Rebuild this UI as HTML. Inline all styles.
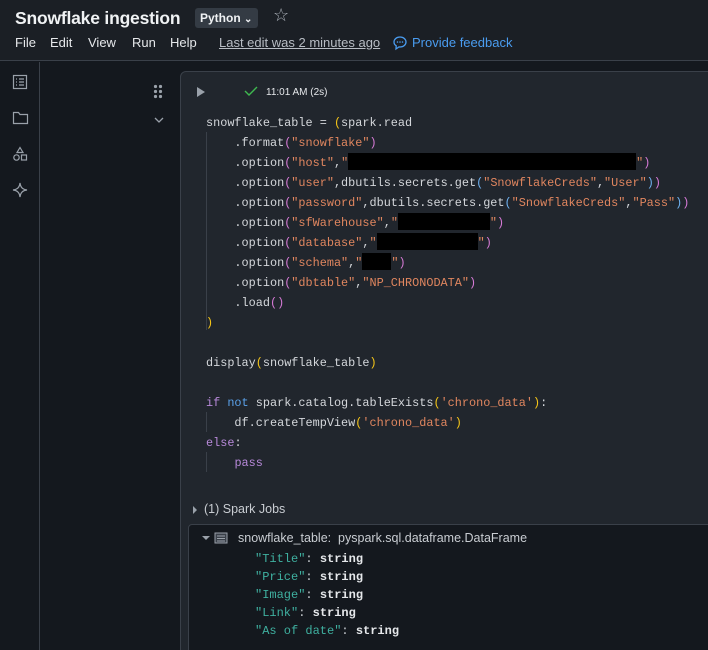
<!DOCTYPE html>
<html style="width:708px;height:650px;overflow:hidden"><head><meta charset="utf-8"><style>
*{margin:0;padding:0;box-sizing:border-box}
body{width:708px;height:650px;background:#14181e;font-family:"Liberation Sans",sans-serif;color:#e6e8eb;position:relative;overflow:hidden}
.hdr{position:absolute;left:0;top:0;width:708px;height:61px;background:#1b1f25;border-bottom:1px solid #3a4049}
.title{position:absolute;left:15px;top:8px;font-size:17.5px;font-weight:bold;color:#f0f2f4;letter-spacing:-0.2px}
.py{position:absolute;left:195px;top:8px;width:63px;height:20px;background:#343b44;border-radius:3px;font-size:12px;font-weight:bold;padding:3px 0 0 5px;color:#f0f2f4}
.star{position:absolute;left:273px;top:5px;font-size:18px;color:#aab0b8}
.menu{position:absolute;top:35px;font-size:13px;color:#e6e8eb}
.side{position:absolute;left:0;top:62px;width:40px;height:588px;border-right:1px solid #3a4049}
.cell{position:absolute;left:180px;top:71px;width:540px;height:590px;background:#21262d;border:1px solid #3a4049;border-radius:6px}
pre{position:absolute;left:206px;top:113px;font-family:"Liberation Mono",monospace;font-size:11.85px;line-height:20px;color:#d4d7db}
.s{color:#e0865f}.b{color:#6fb1f0}.y{color:#f5c518}.m{color:#d67ad6}.k{color:#b789d9}.n{color:#5aa0e8}
.red{display:inline-block;background:#000;height:17px;vertical-align:-4px}
.out{position:absolute;left:188px;top:524px;width:540px;height:140px;background:#14181e;border:1px solid #3a4049;border-radius:4px}
.o{position:absolute;left:255px;font-family:"Liberation Mono",monospace;font-size:12px;font-weight:bold;color:#e6e8eb}
.o span{color:#3fb0a0;font-weight:normal}
.guide{position:absolute;width:1px;background:#3a4049}
</style></head><body>
<div class="hdr">
<div class="title">Snowflake ingestion</div>
<div class="py">Python <span style="font-size:10px">&#8964;</span></div>
<div class="star">☆</div>
<div class="menu" style="left:15px">File</div>
<div class="menu" style="left:50px">Edit</div>
<div class="menu" style="left:88px">View</div>
<div class="menu" style="left:132px">Run</div>
<div class="menu" style="left:170px">Help</div>
<div class="menu" style="left:219px;color:#b8bdc4;text-decoration:underline">Last edit was 2 minutes ago</div>
<svg style="position:absolute;left:392px;top:35px" width="16" height="16" viewBox="0 0 16 16"><path d="M8 2C4.5 2 2 4.2 2 7c0 1.6.8 3 2.2 3.8L4 14l3-2.1c.3 0 .7.1 1 .1 3.5 0 6-2.2 6-5S11.5 2 8 2z" fill="none" stroke="#4a9cf0" stroke-width="1.3"/><circle cx="5.5" cy="7" r=".8" fill="#4a9cf0"/><circle cx="8" cy="7" r=".8" fill="#4a9cf0"/><circle cx="10.5" cy="7" r=".8" fill="#4a9cf0"/></svg>
<div class="menu" style="left:412px;color:#4a9cf0">Provide feedback</div>
</div>
<div class="side">
<svg style="position:absolute;left:12px;top:12px" width="16" height="16" viewBox="0 0 16 16" fill="none" stroke="#9aa1aa" stroke-width="1.2"><rect x="1.5" y="1.5" width="13" height="13"/><path d="M4 5h1M7 5h5M4 8h1M7 8h5M4 11h1M7 11h5"/></svg>
<svg style="position:absolute;left:12px;top:48px" width="17" height="16" viewBox="0 0 17 16" fill="none" stroke="#9aa1aa" stroke-width="1.2"><path d="M1.5 2.5h5l1.5 2h7.5v9h-14z"/></svg>
<svg style="position:absolute;left:12px;top:84px" width="16" height="16" viewBox="0 0 16 16" fill="none" stroke="#9aa1aa" stroke-width="1.2"><path d="M8 1.5L11 6.5H5z"/><circle cx="4.5" cy="11.5" r="2.7"/><rect x="9.5" y="9" width="5" height="5"/></svg>
<svg style="position:absolute;left:12px;top:120px" width="16" height="16" viewBox="0 0 16 16" fill="none" stroke="#9aa1aa" stroke-width="1.2"><path d="M8 1C8.6 5.5 10.5 7.4 15 8 10.5 8.6 8.6 10.5 8 15 7.4 10.5 5.5 8.6 1 8 5.5 7.4 7.4 5.5 8 1z"/></svg>
</div>
<svg style="position:absolute;left:153px;top:84px" width="10" height="16"><g fill="#9aa1aa"><circle cx="2.5" cy="2.5" r="1.6"/><circle cx="7.5" cy="2.5" r="1.6"/><circle cx="2.5" cy="7.5" r="1.6"/><circle cx="7.5" cy="7.5" r="1.6"/><circle cx="2.5" cy="12.5" r="1.6"/><circle cx="7.5" cy="12.5" r="1.6"/></g></svg>
<svg style="position:absolute;left:154px;top:116px" width="10" height="8"><path d="M1 2l4 4 4-4" fill="none" stroke="#9aa1aa" stroke-width="1.3"/></svg>
<div class="cell"></div>
<svg style="position:absolute;left:196px;top:86px" width="10" height="12"><path d="M1 1l8 5-8 5z" fill="#9aa1aa"/></svg>
<svg style="position:absolute;left:244px;top:85px" width="14" height="12"><path d="M1 6l4 4 8-8" fill="none" stroke="#3fb950" stroke-width="1.4"/></svg>
<div style="position:absolute;left:266px;top:87px;font-size:10px;color:#e6e8eb">11:01 AM (2s)</div>
<div class="guide" style="left:206px;top:132px;height:198px"></div>
<div class="guide" style="left:206px;top:412px;height:20px"></div>
<div class="guide" style="left:206px;top:452px;height:20px"></div>
<pre>snowflake_table = <span class="y">(</span>spark.read
    .format<span class="m">(</span><span class="s">"snowflake"</span><span class="m">)</span>
    .option<span class="m">(</span><span class="s">"host"</span>,<span class="s">"</span><span class="red" style="width:288px"></span><span class="s">"</span><span class="m">)</span>
    .option<span class="m">(</span><span class="s">"user"</span>,dbutils.secrets.get<span class="b">(</span><span class="s">"SnowflakeCreds"</span>,<span class="s">"User"</span><span class="b">)</span><span class="m">)</span>
    .option<span class="m">(</span><span class="s">"password"</span>,dbutils.secrets.get<span class="b">(</span><span class="s">"SnowflakeCreds"</span>,<span class="s">"Pass"</span><span class="b">)</span><span class="m">)</span>
    .option<span class="m">(</span><span class="s">"sfWarehouse"</span>,<span class="s">"</span><span class="red" style="width:92px"></span><span class="s">"</span><span class="m">)</span>
    .option<span class="m">(</span><span class="s">"database"</span>,<span class="s">"</span><span class="red" style="width:101px"></span><span class="s">"</span><span class="m">)</span>
    .option<span class="m">(</span><span class="s">"schema"</span>,<span class="s">"</span><span class="red" style="width:29px"></span><span class="s">"</span><span class="m">)</span>
    .option<span class="m">(</span><span class="s">"dbtable"</span>,<span class="s">"NP_CHRONODATA"</span><span class="m">)</span>
    .load<span class="m">()</span>
<span class="y">)</span>

display<span class="y">(</span>snowflake_table<span class="y">)</span>

<span class="k">if</span> <span class="n">not</span> spark.catalog.tableExists<span class="y">(</span><span class="s">'chrono_data'</span><span class="y">)</span>:
    df.createTempView<span class="y">(</span><span class="s">'chrono_data'</span><span class="y">)</span>
<span class="k">else</span>:
    <span class="k">pass</span></pre>
<svg style="position:absolute;left:192px;top:505px" width="6" height="10"><path d="M1 1l4 4-4 4z" fill="#9aa1aa"/></svg>
<div style="position:absolute;left:204px;top:502px;font-size:12.5px;color:#c9cdd2">(1) Spark Jobs</div>
<div class="out"></div>
<svg style="position:absolute;left:201px;top:535px" width="10" height="6"><path d="M1 1h8l-4 4z" fill="#9aa1aa"/></svg>
<svg style="position:absolute;left:214px;top:532px" width="14" height="12" fill="none" stroke="#9aa1aa"><rect x="1" y="1" width="12" height="10" fill="#3a4049"/><path d="M3 4h8M3 6.5h8M3 9h8"/></svg>
<div style="position:absolute;left:238px;top:531px;font-size:12.5px;color:#c9cdd2">snowflake_table:&nbsp; pyspark.sql.dataframe.DataFrame</div>
<div class="o" style="top:552px"><span>"Title"</span><span style="color:#c9cdd2">:</span> string</div>
<div class="o" style="top:570px"><span>"Price"</span><span style="color:#c9cdd2">:</span> string</div>
<div class="o" style="top:588px"><span>"Image"</span><span style="color:#c9cdd2">:</span> string</div>
<div class="o" style="top:606px"><span>"Link"</span><span style="color:#c9cdd2">:</span> string</div>
<div class="o" style="top:624px"><span>"As of date"</span><span style="color:#c9cdd2">:</span> string</div>
</body></html>
